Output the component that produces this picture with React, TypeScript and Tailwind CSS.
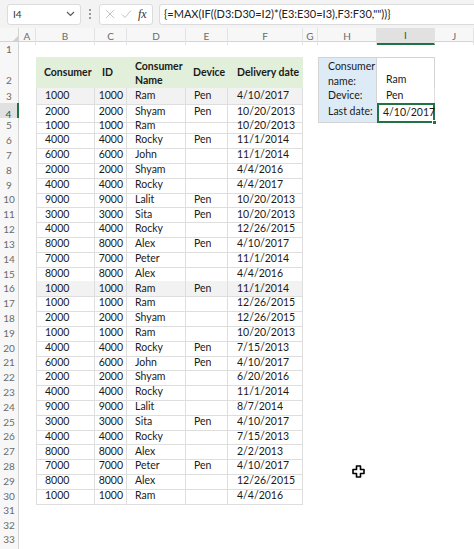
import React from "react";

type Row = [string, string, string, string, string];

const rows: Row[] = [
  ["1000", "1000", "Ram", "Pen", "4/10/2017"],
  ["2000", "2000", "Shyam", "Pen", "10/20/2013"],
  ["1000", "1000", "Ram", "", "10/20/2013"],
  ["4000", "4000", "Rocky", "Pen", "11/1/2014"],
  ["6000", "6000", "John", "", "11/1/2014"],
  ["2000", "2000", "Shyam", "", "4/4/2016"],
  ["4000", "4000", "Rocky", "", "4/4/2017"],
  ["9000", "9000", "Lalit", "Pen", "10/20/2013"],
  ["3000", "3000", "Sita", "Pen", "10/20/2013"],
  ["4000", "4000", "Rocky", "", "12/26/2015"],
  ["8000", "8000", "Alex", "Pen", "4/10/2017"],
  ["7000", "7000", "Peter", "", "11/1/2014"],
  ["8000", "8000", "Alex", "", "4/4/2016"],
  ["1000", "1000", "Ram", "Pen", "11/1/2014"],
  ["1000", "1000", "Ram", "", "12/26/2015"],
  ["2000", "2000", "Shyam", "", "12/26/2015"],
  ["1000", "1000", "Ram", "", "10/20/2013"],
  ["4000", "4000", "Rocky", "Pen", "7/15/2013"],
  ["6000", "6000", "John", "Pen", "4/10/2017"],
  ["2000", "2000", "Shyam", "", "6/20/2016"],
  ["4000", "4000", "Rocky", "", "11/1/2014"],
  ["9000", "9000", "Lalit", "", "8/7/2014"],
  ["3000", "3000", "Sita", "Pen", "4/10/2017"],
  ["4000", "4000", "Rocky", "", "7/15/2013"],
  ["8000", "8000", "Alex", "", "2/2/2013"],
  ["7000", "7000", "Peter", "Pen", "4/10/2017"],
  ["8000", "8000", "Alex", "", "12/26/2015"],
  ["1000", "1000", "Ram", "", "4/4/2016"],
];

const cols = "grid grid-cols-[19px_17px_59px_32px_59px_42px_75px_15px_59px_58px_1fr]";
const letters = ["A", "B", "C", "D", "E", "F", "G", "H", "I", "J"];

function RowHead({ n, active }: { n: number; active?: boolean }) {
  return (
    <div
      className={
        "flex items-end justify-center pb-[1px] text-[10px] border-r " +
        (active
          ? "bg-[#e1e1e1] text-[#1f5c38] border-r-2 border-r-[#217346]"
          : "bg-[#f7f7f7] text-[#6b6b6b] border-r-[#d4d4d4]")
      }
    >
      {n}
    </div>
  );
}

export default function App() {
  return (
    <div className="w-[474px] h-[549px] overflow-hidden bg-white text-[#1a1a1a] font-['Lato','Open_Sans',sans-serif] text-[10.5px]">
      {/* formula bar */}
      <div className="h-[28px] bg-[#f3f3f3] flex items-center pl-[7px] gap-[6px]">
        <div className="w-[74px] h-[21px] bg-white border border-[#dcdcdc] rounded-[3px] flex items-center justify-between px-[5px] text-[10px] text-[#333]">
          <span>I4</span>
          <svg width="9" height="6" viewBox="0 0 9 6"><path d="M1 1l3.5 3.5L8 1" stroke="#555" strokeWidth="1.1" fill="none" /></svg>
        </div>
        <div className="flex flex-col gap-[2px] mx-[2px]">
          <span className="w-[2px] h-[2px] bg-[#999]" />
          <span className="w-[2px] h-[2px] bg-[#999]" />
          <span className="w-[2px] h-[2px] bg-[#999]" />
        </div>
        <div className="w-[54px] h-[21px] bg-white border border-[#dcdcdc] rounded-[3px] flex items-center gap-[6px] px-[5px]">
          <svg width="10" height="10" viewBox="0 0 10 10"><path d="M1 1l8 8M9 1l-8 8" stroke="#c4c4c4" strokeWidth="1" /></svg>
          <svg width="11" height="10" viewBox="0 0 11 10"><path d="M1 5.5l3 3L10 1.5" stroke="#c4c4c4" strokeWidth="1" fill="none" /></svg>
          <span className="font-['Liberation_Serif',serif] italic text-[12px] text-[#333] leading-none">fx</span>
        </div>
        <div className="flex-1 h-[21px] bg-white border border-[#dcdcdc] rounded-l-[3px] border-r-0 flex items-center pl-[4px] text-[11px] text-[#222]">
          {'{=MAX(IF((D3:D30=I2)*(E3:E30=I3),F3:F30,""))}'}
        </div>
      </div>

      {/* column headers */}
      <div className={cols + " h-[14px] bg-[#f7f7f7] border-b border-[#d4d4d4] text-[10px] text-[#6b6b6b]"}>
        <div className="border-r border-[#d4d4d4] flex items-end justify-end">
          <svg width="9" height="9" viewBox="0 0 9 9"><path d="M9 0v9H0z" fill="#d0d0d0" /></svg>
        </div>
        {letters.map((l) => (
          <div
            key={l}
            className={
              "flex items-center justify-center border-r border-[#e3e3e3] " +
              (l === "I" ? "bg-[#e1e1e1] border-b-2 border-b-[#217346] text-[#1f5c38]" : "")
            }
          >
            {l}
          </div>
        ))}
      </div>

      {/* row 1 */}
      <div className={cols + " h-[15px]"}>
        <RowHead n={1} />
      </div>

      {/* row 2 */}
      <div className={cols + " h-[31px]"}>
        <RowHead n={2} />
        <div />
        <div className="bg-[#e2efda] border-b border-[#d4d4d4] font-bold flex items-center pl-[8px]">Consumer</div>
        <div className="bg-[#e2efda] border-b border-[#d4d4d4] font-bold flex items-center pl-[7px]">ID</div>
        <div className="bg-[#e2efda] border-b border-[#d4d4d4] font-bold flex items-center pl-[8px] leading-[14px]">
          Consumer<br />Name
        </div>
        <div className="bg-[#e2efda] border-b border-[#d4d4d4] font-bold flex items-center pl-[7px]">Device</div>
        <div className="bg-[#e2efda] border-b border-[#d4d4d4] font-bold flex items-center pl-[9px]">Delivery date</div>
        <div />
        <div className="bg-[#ddebf7] border border-[#d4d4d4] border-b-0 pl-[9px] leading-[15px] pt-[1px]">
          Consumer<br />name:
        </div>
        <div className="border-t border-r border-[#d4d4d4] flex items-end pl-[9px] pb-[1px]">Ram</div>
      </div>

      {/* data rows */}
      {rows.map((r, i) => {
        const n = i + 3;
        const shade = n === 3 || n === 16 ? "bg-[#f2f2f2]" : "";
        const cell = "flex items-center border-b border-r border-[#dedede] " + shade;
        return (
          <div key={n} className={cols + " h-[14.82px]"}>
            <RowHead n={n} active={n === 4} />
            <div />
            <div className={cell + " border-l pl-[8px]"}>{r[0]}</div>
            <div className={cell + " justify-end pr-[3px]"}>{r[1]}</div>
            <div className={cell + " pl-[8px]"}>{r[2]}</div>
            <div className={cell + " pl-[8px]"}>{r[3]}</div>
            <div className={cell + " pl-[9px]"}>{r[4]}</div>
            <div />
            {n === 3 && (
              <>
                <div className="bg-[#ddebf7] border-l border-r border-[#d4d4d4] border-b border-b-[#e6e6e6] flex items-center pl-[9px]">Device:</div>
                <div className="border-r border-b border-[#dedede] flex items-center pl-[9px]">Pen</div>
              </>
            )}
            {n === 4 && (
              <>
                <div className="bg-[#ddebf7] border-l border-b border-[#d4d4d4] flex items-center pl-[9px]">Last date:</div>
                <div className="relative border-2 border-[#217346] flex items-center pl-[4px]">
                  4/10/2017
                  <span className="absolute -right-[4px] -bottom-[4px] w-[5px] h-[5px] bg-[#217346] border border-white" />
                </div>
              </>
            )}
            {n === 30 && (
              <div className="col-start-9 col-span-3 relative">
                <svg className="absolute left-[34px] -top-[23px]" width="13" height="13" viewBox="0 0 13 13">
                  <path d="M4.5 1h4v3.5H12v4H8.5V12h-4V8.5H1v-4h3.5z" fill="#fff" stroke="#000" strokeWidth="1.6" strokeLinejoin="round" />
                </svg>
              </div>
            )}
          </div>
        );
      })}

      {[31, 32, 33].map((n) => (
        <div key={n} className={cols + " h-[14.82px]"}>
          <RowHead n={n} />
        </div>
      ))}
      <div className={cols + " h-[14.82px]"}>
        <div className="bg-[#f7f7f7] border-r border-[#d4d4d4]" />
      </div>
    </div>
  );
}
